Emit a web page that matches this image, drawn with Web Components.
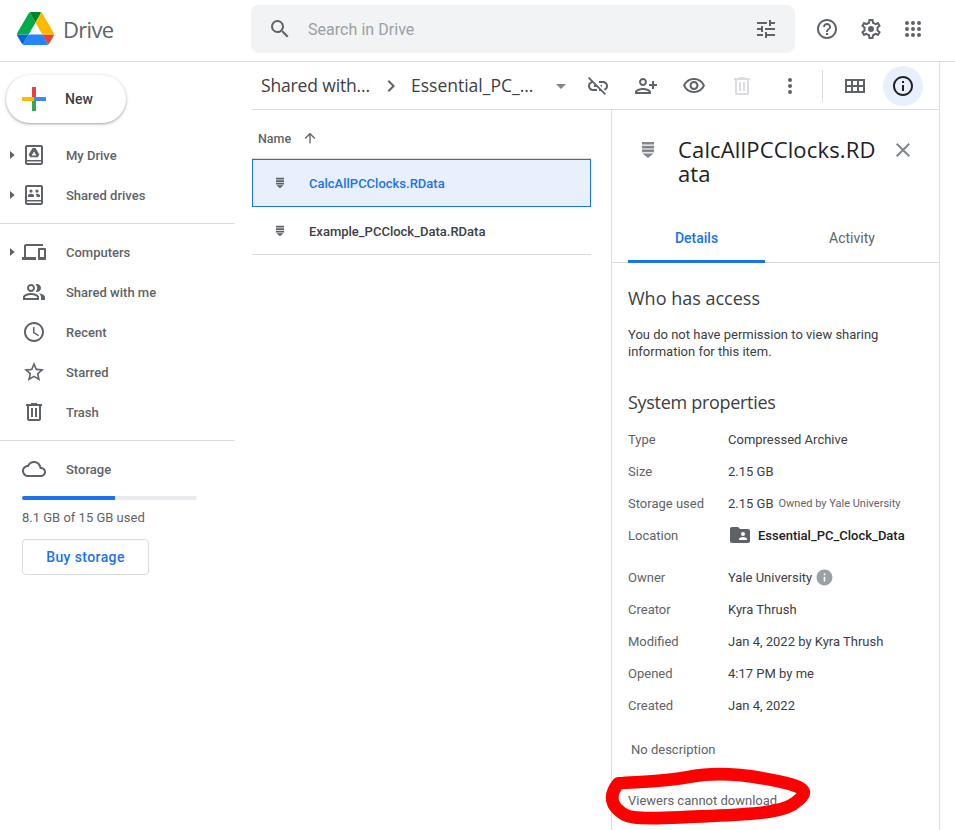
<!DOCTYPE html>
<html lang="en"><head><meta charset="utf-8"><title>Drive</title>
<style>html,body{margin:0;padding:0;height:830px;overflow:hidden;background:#fff;font-family:Roboto,"Liberation Sans",sans-serif}</style>
</head><body>
<gd-app></gd-app>
<script>
const P={
search:'M15.5 14h-.79l-.28-.27A6.471 6.471 0 0 0 16 9.5 6.5 6.5 0 1 0 9.5 16c1.61 0 3.09-.59 4.23-1.57l.27.28v.79l5 4.99L20.49 19l-4.99-5zm-6 0C7.01 14 5 11.99 5 9.5S7.01 5 9.5 5 14 7.01 14 9.5 11.99 14 9.5 14z',
tune:'M3 17v2h6v-2H3zM3 5v2h10V5H3zm10 16v-2h8v-2h-8v-2h-2v6h2zM7 9v2H3v2h4v2h2V9H7zm14 4v-2H11v2h10zm-6-4h2V7h4V5h-4V3h-2v6z',
help:'M11 18h2v-2h-2v2zm1-16C6.48 2 2 6.48 2 12s4.48 10 10 10 10-4.48 10-10S17.52 2 12 2zm0 18c-4.41 0-8-3.59-8-8s3.59-8 8-8 8 3.59 8 8-3.59 8-8 8zm0-14c-2.21 0-4 1.79-4 4h2c0-1.1.9-2 2-2s2 .9 2 2c0 2-3 1.75-3 5h2c0-2.25 3-2.5 3-5 0-2.21-1.79-4-4-4z',
gear:'M19.43 12.98c.04-.32.07-.64.07-.98 0-.34-.03-.66-.07-.98l2.11-1.65c.19-.15.24-.42.12-.64l-2-3.46c-.09-.16-.26-.25-.44-.25-.06 0-.12.01-.17.03l-2.49 1c-.52-.4-1.08-.73-1.69-.98l-.38-2.65C14.46 2.18 14.25 2 14 2h-4c-.25 0-.46.18-.49.42l-.38 2.65c-.61.25-1.17.59-1.69.98l-2.49-1c-.06-.02-.12-.03-.18-.03-.17 0-.34.09-.43.25l-2 3.46c-.13.22-.07.49.12.64l2.11 1.65c-.04.32-.07.65-.07.98 0 .33.03.66.07.98l-2.11 1.65c-.19.15-.24.42-.12.64l2 3.46c.09.16.26.25.44.25.06 0 .12-.01.17-.03l2.49-1c.52.4 1.08.73 1.69.98l.38 2.65c.03.24.24.42.49.42h4c.25 0 .46-.18.49-.42l.38-2.65c.61-.25 1.17-.59 1.69-.98l2.49 1c.06.02.12.03.18.03.17 0 .34-.09.43-.25l2-3.46c.12-.22.07-.49-.12-.64l-2.11-1.65zm-1.98-1.71c.04.31.05.52.05.73 0 .21-.02.43-.05.73l-.14 1.13.89.7 1.08.84-.7 1.21-1.27-.51-1.04-.42-.9.68c-.43.32-.84.56-1.25.73l-1.06.43-.16 1.13-.2 1.35h-1.4l-.19-1.35-.16-1.13-1.06-.43c-.43-.18-.83-.41-1.23-.71l-.91-.7-1.06.43-1.27.51-.7-1.21 1.08-.84.89-.7-.14-1.13c-.03-.31-.05-.54-.05-.74s.02-.43.05-.73l.14-1.13-.89-.7-1.08-.84.7-1.21 1.27.51 1.04.42.9-.68c.43-.32.84-.56 1.25-.73l1.06-.43.16-1.13.2-1.35h1.39l.19 1.35.16 1.13 1.06.43c.43.18.83.41 1.23.71l.91.7 1.06-.43 1.27-.51.7 1.21-1.07.85-.89.7.14 1.13zM12 9a3 3 0 1 0 0 6 3 3 0 0 0 0-6z',
apps:'M6 4a2 2 0 1 0 0 4 2 2 0 0 0 0-4zm6 0a2 2 0 1 0 0 4 2 2 0 0 0 0-4zm6 0a2 2 0 1 0 0 4 2 2 0 0 0 0-4zM6 10a2 2 0 1 0 0 4 2 2 0 0 0 0-4zm6 0a2 2 0 1 0 0 4 2 2 0 0 0 0-4zm6 0a2 2 0 1 0 0 4 2 2 0 0 0 0-4zM6 16a2 2 0 1 0 0 4 2 2 0 0 0 0-4zm6 0a2 2 0 1 0 0 4 2 2 0 0 0 0-4zm6 0a2 2 0 1 0 0 4 2 2 0 0 0 0-4z',
linkoff:'M17 7h-4v2h4c1.65 0 3 1.35 3 3 0 1.43-1.01 2.63-2.35 2.93l1.46 1.46C20.88 15.61 22 13.95 22 12c0-2.76-2.24-5-5-5zm-1 4h-2.19l2 2H16zM2 4.27l3.11 3.11A4.991 4.991 0 0 0 2 12c0 2.76 2.24 5 5 5h4v-2H7c-1.65 0-3-1.35-3-3 0-1.59 1.21-2.9 2.76-3.07L8.73 11H8v2h2.73L13 15.27V17h1.73l4.01 4L20 19.74 3.27 3 2 4.27z',
personadd:'M9 12c2.21 0 4-1.79 4-4s-1.79-4-4-4-4 1.79-4 4 1.79 4 4 4zm0-6c1.1 0 2 .9 2 2s-.9 2-2 2-2-.9-2-2 .9-2 2-2zm0 8c-2.67 0-8 1.34-8 4v2h16v-2c0-2.66-5.33-4-8-4zm-6 4c.22-.72 3.31-2 6-2 2.7 0 5.8 1.29 6 2H3zm17-3v-3h3v-2h-3V7h-2v3h-3v2h3v3h2z',
eye:'M12 6a9.77 9.77 0 0 1 8.82 5.5C19.17 14.87 15.79 17 12 17s-7.17-2.13-8.82-5.5A9.77 9.77 0 0 1 12 6m0-2C7 4 2.73 7.11 1 11.5 2.73 15.89 7 19 12 19s9.27-3.11 11-7.5C21.27 7.11 17 4 12 4zm0 5a2.5 2.5 0 0 1 0 5 2.5 2.5 0 0 1 0-5m0-2c-2.48 0-4.5 2.02-4.5 4.5S9.52 16 12 16s4.5-2.02 4.5-4.5S14.48 7 12 7z',
trash:'M15 4V3H9v1H4v2h1v13c0 1.1.9 2 2 2h10c1.1 0 2-.9 2-2V6h1V4h-5zm2 15H7V6h10v13zM9 8h2v9H9zm4 0h2v9h-2z',
more:'M12 4a2 2 0 1 0 0 4 2 2 0 0 0 0-4zm0 6a2 2 0 1 0 0 4 2 2 0 0 0 0-4zm0 6a2 2 0 1 0 0 4 2 2 0 0 0 0-4z',
grid:'M2 5v14h20V5H2zm2 2h4v4H4V7zm6 0h4v4h-4V7zm6 0h4v4h-4V7zM4 13h4v4H4v-4zm6 0h4v4h-4v-4zm6 0h4v4h-4v-4z',
info:'M11 7h2v2h-2zm0 4h2v6h-2zm1-9C6.48 2 2 6.48 2 12s4.48 10 10 10 10-4.48 10-10S17.52 2 12 2zm0 18c-4.41 0-8-3.59-8-8s3.59-8 8-8 8 3.59 8 8-3.59 8-8 8z',
archive:'M6 4h12v2.6H6zM6 7.800h12v2.600H6zM6 11.600h12v2.600H6zM6.500 15.400h11L12 20z',
clock:'M11.99 2C6.47 2 2 6.48 2 12s4.47 10 9.99 10C17.52 22 22 17.52 22 12S17.52 2 11.99 2zM12 20c-4.42 0-8-3.58-8-8s3.58-8 8-8 8 3.58 8 8-3.58 8-8 8zm.5-13H11v6l5.25 3.15.75-1.23-4.5-2.67z',
star:'M22 9.24l-7.19-.62L12 2 9.19 8.63 2 9.24l5.46 4.73L5.82 21 12 17.27 18.18 21l-1.63-7.03L22 9.24zM12 15.4l-3.76 2.27 1-4.28-3.32-2.88 4.38-.38L12 6.1l1.71 4.04 4.38.38-3.32 2.88 1 4.28L12 15.4z',
people:'M16.67 13.13C18.04 14.06 19 15.32 19 17v3h4v-3c0-2.18-3.57-3.47-6.33-3.87zM15 12c2.21 0 4-1.79 4-4s-1.79-4-4-4c-.47 0-.91.1-1.33.24a5.98 5.98 0 0 1 0 7.52c.42.14.86.24 1.33.24zM9 12c2.21 0 4-1.79 4-4s-1.79-4-4-4-4 1.79-4 4 1.79 4 4 4zm0-6c1.1 0 2 .9 2 2s-.9 2-2 2-2-.9-2-2 .9-2 2-2zM9 13c-2.67 0-8 1.34-8 4v3h16v-3c0-2.66-5.33-4-8-4zm6 5H3v-.99C3.2 16.29 6.3 15 9 15s5.8 1.29 6 2v1z',
computers:'M4 6h17V4H4c-1.1 0-2 .9-2 2v11H0v3h14v-3H4V6zm19 2h-6c-.55 0-1 .45-1 1v10c0 .55.45 1 1 1h6c.55 0 1-.45 1-1V9c0-.55-.45-1-1-1zm-1 9h-4v-7h4v7z',
mydrive:'M19 2H5c-1.1 0-2 .9-2 2v16c0 1.1.9 2 2 2h14c1.1 0 2-.9 2-2V4c0-1.1-.9-2-2-2zM5 4h14v13H5V4zm0 16v-1.500h14V20H5zM10.500 5h3l3.800 6.500-1.500 2.800H8.200l-1.500-2.800L10.500 5zM12 8.500l-2.300 4h4.600L12 8.500z',
shared:'M19 2H5c-1.1 0-2 .9-2 2v16c0 1.1.9 2 2 2h14c1.100 0 2-.9 2-2V4c0-1.1-.9-2-2-2zM5 4h14v13H5V4zm0 16v-1.500h14V20H5zM9 6.500a1.600 1.600 0 1 0 0 3.200 1.600 1.600 0 0 0 0-3.200zm6 0a1.600 1.600 0 1 0 0 3.200 1.600 1.600 0 0 0 0-3.200zM9 10.800c-1.500 0-3 .7-3 1.700V14h6v-1.500c0-1-1.500-1.700-3-1.700zm6 0c-.4 0-.9.100-1.300.2.500.4.800.9.800 1.500V14H18v-1.500c0-1-1.500-1.700-3-1.700z',
cloud:'M19.35 10.04C18.67 6.59 15.64 4 12 4 9.11 4 6.6 5.64 5.35 8.04 2.34 8.36 0 10.91 0 14c0 3.31 2.69 6 6 6h13c2.76 0 5-2.24 5-5 0-2.64-2.05-4.78-4.65-4.96zM19 18H6c-2.21 0-4-1.79-4-4 0-2.05 1.53-3.76 3.56-3.97l1.07-.11.5-.95C8.08 7.14 9.94 6 12 6c2.62 0 4.88 1.86 5.39 4.43l.3 1.5 1.530.11c1.56.1 2.78 1.41 2.78 2.96 0 1.65-1.35 3-3 3z',
close:'M19 6.41 17.59 5 12 10.59 6.41 5 5 6.41 10.59 12 5 17.59 6.41 19 12 13.41 17.59 19 19 17.59 13.41 12z',
up:'M4 12l1.41 1.41L11 7.83V20h2V7.83l5.58 5.59L20 12l-8-8-8 8z',
chevron:'M8.590 16.590 13.170 12 8.590 7.410 10 6l6 6-6 6z',
caret:'M7 10l5 5 5-5z',
right:'M9 6l7 6-7 6z',
folder:'M20 6h-8l-2-2H4c-1.100 0-2 .9-2 2v12c0 1.100.9 2 2 2h16c1.100 0 2-.9 2-2V8c0-1.100-.9-2-2-2zm-5 3a2 2 0 1 1 0 4 2 2 0 0 1 0-4zm4 8h-8v-1c0-1.330 2.670-2 4-2s4 .67 4 2v1z',
infofill:'M12 2C6.480 2 2 6.480 2 12s4.480 10 10 10 10-4.480 10-10S17.520 2 12 2zm1 15h-2v-6h2v6zm0-8h-2V7h2v2z'
};
function def(name,html,setup){customElements.define(name,class extends HTMLElement{constructor(){super();this.attachShadow({mode:'open'}).innerHTML=html}connectedCallback(){setup&&setup.call(this,this.shadowRoot)}})}

def('gd-icon','<style>:host{display:inline-flex;flex:none;width:24px;height:24px;color:#5f6368}svg{width:100%;height:100%;display:block;fill:currentColor}</style><svg viewBox="0 0 24 24"><path/></svg>',function(r){const n=this.getAttribute('name');if(n)r.querySelector('path').setAttribute('d',P[n]);const s=this.getAttribute('size');if(s){this.style.width=s+'px';this.style.height=s+'px'}const c=this.getAttribute('color');if(c)this.style.color=c});

def('gd-logo',`<style>:host{display:block;width:37px;height:33px}svg{display:block;width:100%;height:100%}</style><svg viewBox="0 0 87.3 78"><path d="m6.6 66.85 3.85 6.65c.8 1.4 1.95 2.5 3.3 3.3l13.75-23.8h-27.5c0 1.55.4 3.1 1.2 4.5z" fill="#0066da"/><path d="m43.65 25-13.75-23.8c-1.35.8-2.5 1.9-3.3 3.3l-25.4 44a9.06 9.06 0 0 0 -1.2 4.5h27.5z" fill="#00ac47"/><path d="m73.55 76.8c1.35-.8 2.5-1.9 3.3-3.3l1.6-2.75 7.65-13.25c.8-1.4 1.2-2.95 1.2-4.5h-27.502l5.852 11.5z" fill="#ea4335"/><path d="m43.65 25 13.75-23.8c-1.35-.8-2.9-1.2-4.5-1.2h-18.5c-1.6 0-3.15.45-4.5 1.2z" fill="#00832d"/><path d="m59.8 53h-32.3l-13.75 23.8c1.35.8 2.9 1.2 4.5 1.2h50.8c1.6 0 3.15-.45 4.5-1.2z" fill="#2684fc"/><path d="m73.4 26.5-12.7-22c-.8-1.4-1.95-2.5-3.3-3.3l-13.75 23.8 16.15 28h27.45c0-1.55-.4-3.1-1.2-4.5z" fill="#ffba00"/></svg>`);

def('gd-header',`<style>
:host{display:flex;align-items:center;height:57px;padding-bottom:4px;border-bottom:1px solid #dadce0;padding-left:17px}
.brand{width:234px;display:flex;align-items:center;gap:9px;color:#5f6368;font:400 22px "Open Sans",Roboto,sans-serif}
.brand span{letter-spacing:-.7px}
.search{width:544px;height:48px;background:#f1f3f4;border-radius:8px;display:flex;align-items:center;padding:0 17px;box-sizing:border-box;gap:16px;font-size:16px;letter-spacing:.04px;color:#9aa0a6}
.search span{flex:1;padding-top:1px}
.tools{display:flex;margin-left:20px;gap:20px}
.tools gd-icon:last-child{margin-left:-2px}
</style>
<div class="brand"><gd-logo></gd-logo><span>Drive</span></div>
<div class="search"><gd-icon name="search"></gd-icon><span>Search in Drive</span><gd-icon name="tune"></gd-icon></div>
<div class="tools"><gd-icon name="help"></gd-icon><gd-icon name="gear"></gd-icon><gd-icon name="apps"></gd-icon></div>`);

def('gd-nav-item',`<style>
:host{display:flex;align-items:center;height:40px;position:relative;padding-left:22px;gap:20px;font:500 13px Roboto,sans-serif;color:#5f6368}
.ar{position:absolute;left:4px;top:12px}
</style><gd-icon class="ar" name="right" size="16"></gd-icon><gd-icon id="i"></gd-icon><slot></slot>`,function(r){r.getElementById('i').shadowRoot.querySelector('path').setAttribute('d',P[this.getAttribute('icon')]);if(!this.hasAttribute('arrow'))r.querySelector('.ar').style.display='none'});

def('gd-sidebar',`<style>
:host{display:block;width:235px;flex:none}
.new{display:flex;align-items:center;box-sizing:border-box;width:120px;height:48px;margin:13px 0 12px 6px;border-radius:24px;background:#fff;box-shadow:0 1px 2px 0 rgba(60,64,67,.3),0 1px 3px 1px rgba(60,64,67,.15);padding-left:16px;gap:19px;font:500 14px Roboto,sans-serif;color:#3c4043}
.new svg{width:24px;height:24px;flex:none}
hr{border:0;border-top:1px solid #dadce0;margin:0}
.h1{margin:8px 0 8px}.h2{margin:8px 0 8px}
.store{padding:0 0 0 22px;font:500 13px Roboto,sans-serif;color:#5f6368}
.bar{width:175px;height:4px;background:#e8eaed;display:block;margin-top:7px;border-radius:2px;overflow:hidden}
.bar i{display:block;width:93px;height:4px;background:#1a73e8}
.used{font:400 13px Roboto,sans-serif;margin-top:9px;height:18px;line-height:18px}
.buy{display:flex;align-items:center;justify-content:center;box-sizing:border-box;width:127px;height:36px;margin-top:12px;border:1px solid #dadce0;border-radius:4px;color:#1a73e8;font:500 14px Roboto,sans-serif;letter-spacing:.4px}
</style>
<div class="new"><svg viewBox="0 0 24 24"><rect x="10" y="0" width="4" height="12" fill="#ea4335"/><rect x="12" y="10" width="12" height="4" fill="#4285f4"/><rect x="10" y="12" width="4" height="12" fill="#34a853"/><rect x="0" y="10" width="12" height="4" fill="#fbbc04"/></svg>New</div>
<gd-nav-item icon="mydrive" arrow>My Drive</gd-nav-item>
<gd-nav-item icon="shared" arrow>Shared drives</gd-nav-item>
<hr class="h1">
<gd-nav-item icon="computers" arrow>Computers</gd-nav-item>
<gd-nav-item icon="people">Shared with me</gd-nav-item>
<gd-nav-item icon="clock">Recent</gd-nav-item>
<gd-nav-item icon="star">Starred</gd-nav-item>
<gd-nav-item icon="trash">Trash</gd-nav-item>
<hr class="h2">
<gd-nav-item icon="cloud">Storage</gd-nav-item>
<div class="store"><span class="bar"><i></i></span><div class="used">8.1 GB of 15 GB used</div><div class="buy">Buy storage</div></div>`);

def('gd-toolbar',`<style>
:host{display:flex;align-items:center;height:47px;border-bottom:1px solid #dadce0;padding-left:9px;color:#3c4043;font:400 17.5px "Open Sans",Roboto,sans-serif;position:relative}
.c1{width:110px;white-space:nowrap;letter-spacing:-.15px;padding-bottom:2px}
.c2{width:138px;white-space:nowrap;padding-bottom:2px}
.sep{margin:0 8px}
.btn{width:48px;height:40px;display:flex;align-items:center;justify-content:center;flex:none}
.div{width:1px;height:32px;background:#dadce0;margin:0 8px}
.on{width:40px;height:40px;background:#e8f0fe;border-radius:50%;display:flex;align-items:center;justify-content:center;margin-left:4px}
.lead{display:flex;align-items:center;width:313px;flex:none}
</style>
<div class="lead"><span class="c1">Shared with...</span><gd-icon class="sep" name="chevron" size="24"></gd-icon><span class="c2">Essential_PC_...</span><gd-icon name="caret" color="#80868b"></gd-icon></div>
<div class="btn"><gd-icon name="linkoff"></gd-icon></div><div class="btn"><gd-icon name="personadd"></gd-icon></div><div class="btn"><gd-icon name="eye"></gd-icon></div><div class="btn"><gd-icon name="trash" color="#dadce0"></gd-icon></div><div class="btn"><gd-icon name="more"></gd-icon></div>
<div class="div"></div><div class="btn"><gd-icon name="grid"></gd-icon></div><div class="on"><gd-icon name="info" color="#202124"></gd-icon></div>`);

def('gd-file-row',`<style>
:host{display:flex;align-items:center;height:46px;padding-top:1px;border-bottom:1px solid #dadce0;padding-left:20px;gap:21px;font:500 13px Roboto,sans-serif;color:#3c4043}
:host([selected]){background:#e8f0fe;border:1px solid #1a73e8;color:#1a73e8;height:46px;padding-top:0;padding-left:19px}
</style><gd-icon name="archive" size="16"></gd-icon><slot></slot>`);

def('gd-files',`<style>
:host{display:block;width:339px;flex:none}
.head{display:flex;align-items:center;box-sizing:border-box;height:49px;padding-top:8px;border-bottom:1px solid #dadce0;padding-left:6px;gap:11px;font:500 12.5px Roboto,sans-serif;color:#5f6368}
</style><div class="head">Name <gd-icon name="up" size="16"></gd-icon></div>
<gd-file-row selected>CalcAllPCClocks.RData</gd-file-row>
<gd-file-row>Example_PCClock_Data.RData</gd-file-row>`);

def('gd-prop',`<style>
:host{display:flex;align-items:center;height:32px;font:400 13px Roboto,sans-serif;color:#3c4043}
.k{width:100px;color:#5f6368;flex:none}
.v{display:flex;align-items:center;gap:6px;white-space:nowrap}
</style><div class="k"></div><div class="v"><slot></slot></div>`,function(r){r.querySelector('.k').textContent=this.getAttribute('k')});

def('gd-details',`<style>
:host{display:block;width:327px;flex:none;border-left:1px solid #dadce0;margin-left:20px;position:relative;height:720px;font-family:Roboto,sans-serif;color:#3c4043}
.title{display:flex;padding:28px 0 0 24px;height:60px;gap:18px}
.title h1{margin:-1px 0 0;width:200px;flex:none;font:400 22px/24px "Open Sans",Roboto,sans-serif;letter-spacing:.15px;color:#202124;word-break:break-all}
.tabs{display:flex;height:49px;margin-top:15px;border-bottom:1px solid #dadce0;padding-left:16px;font:500 14px Roboto,sans-serif}
.tab{width:137px;display:flex;align-items:center;justify-content:center;color:#1a73e8;border-bottom:3px solid #1a73e8;box-sizing:border-box;height:50px;padding-top:3px}
.tab2{width:174px;display:flex;align-items:center;justify-content:center;color:#5f6368;font-weight:400;height:50px;box-sizing:border-box}
.body{padding:0 16px}
h2{margin:0;font:400 18px/24px "Open Sans",Roboto,sans-serif;color:#3c4043}
.who{margin-top:23px}
p{margin:16px 0 0;font:400 13px/17px Roboto,sans-serif;color:#3c4043}
.sys{margin-top:30px;margin-bottom:9px;letter-spacing:-.3px}
.pl{margin-top:10px}
.small{font-size:11px;color:#5f6368;margin-left:-1px}
.bold{font-weight:500;color:#202124}
.oi{margin-left:-3.5px}
.nd{margin:20px 0 0 3px;font:400 13px/17px Roboto,sans-serif;color:#5f6368}
.vc{margin-top:34px;font:400 13px/17px Roboto,sans-serif;color:#5f6368}
.red{position:absolute;left:-22px;top:620px;width:240px;height:100px;pointer-events:none}
.red path{fill:none;stroke:#f00;stroke-width:38;stroke-linejoin:round}
.x{margin-left:-5px}
</style>
<div class="title"><gd-icon name="archive" size="24" color="#80868b"></gd-icon><h1>CalcAllPCClocks.RData</h1><gd-icon class="x" name="close" color="#80868b"></gd-icon></div>
<div class="tabs"><div class="tab">Details</div><div class="tab2">Activity</div></div>
<div class="body">
<h2 class="who">Who has access</h2>
<p>You do not have permission to view sharing information for this item.</p>
<h2 class="sys">System properties</h2>
<gd-prop k="Type">Compressed Archive</gd-prop>
<gd-prop k="Size">2.15 GB</gd-prop>
<gd-prop k="Storage used">2.15 GB <span class="small">Owned by Yale University</span></gd-prop>
<gd-prop k="Location"><gd-icon name="folder" size="24"></gd-icon><span class="bold">Essential_PC_Clock_Data</span></gd-prop>
<gd-prop class="pl" k="Owner">Yale University <gd-icon class="oi" name="infofill" size="19" color="#9aa0a6"></gd-icon></gd-prop>
<gd-prop k="Creator">Kyra Thrush</gd-prop>
<gd-prop k="Modified">Jan 4, 2022 by Kyra Thrush</gd-prop>
<gd-prop k="Opened">4:17 PM by me</gd-prop>
<gd-prop k="Created">Jan 4, 2022</gd-prop>
<div class="nd">No description</div>
<div class="vc">Viewers cannot download</div>
</div>
<svg class="red" viewBox="0 0 720 300"><path d="M85 160C150 155 220 155 300 140S480 135 570 155S655 190 610 222S420 255 270 262S110 262 85 240S60 190 85 160Z"/></svg>`);

def('gd-main',`<style>
:host{display:block;width:687px;margin-left:17px;flex:none;height:768px;position:relative;border-right:1px solid #dadce0}
.cols{display:flex;align-items:stretch}
</style><gd-toolbar></gd-toolbar><div class="cols"><gd-files></gd-files><gd-details></gd-details></div>`);

def('gd-app',`<style>
:host{display:block;width:955px;height:830px;overflow:hidden}
.row{display:flex}
</style><gd-header></gd-header><div class="row"><gd-sidebar></gd-sidebar><gd-main></gd-main></div>`);
</script>
</body></html>
